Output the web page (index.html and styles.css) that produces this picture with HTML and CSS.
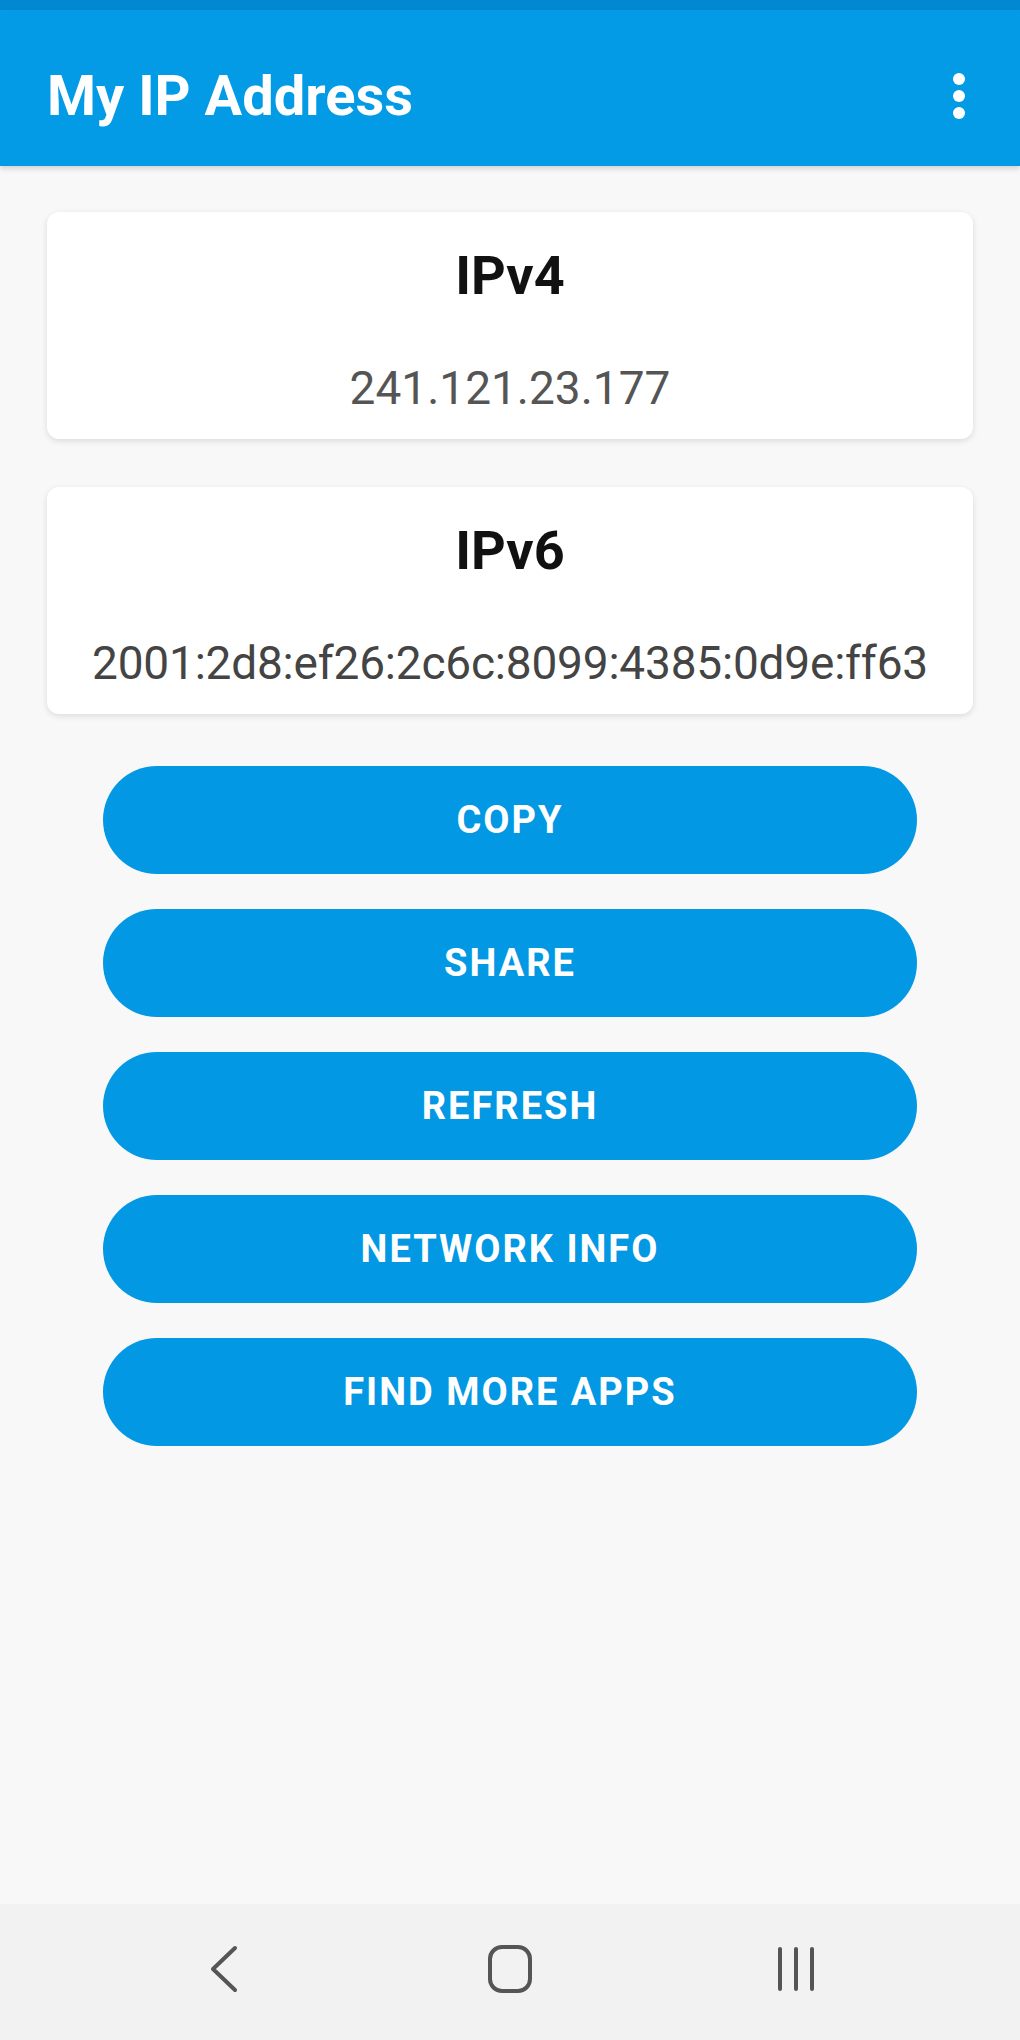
FILE: index.html
```html
<!DOCTYPE html>
<html lang="en">
	<head>
		<meta charset="utf-8" name="viewport" content="width=device-width,initial-scale=1.0" />
		<title>My IP Address</title>
		<link rel="stylesheet" href="styles.css">
	</head>
	<body>
		<div class="screen">
			<div class="status"></div>
			<div class="toolbar">
				<h1 class="title">My IP Address</h1>
				<div class="menu">
					<span></span>
					<span></span>
					<span></span>
				</div>
			</div>

			<div class="content">
				<div class="card">
					<h3>IPv4</h3>
					<p>241.121.23.177</p>
				</div>
				<div class="card">
					<h3>IPv6</h3>
					<p class="long">2001:2d8:ef26:2c6c:8099:4385:0d9e:ff63</p>
				</div>

				<div class="buttons">
					<button>Copy</button>
					<button>Share</button>
					<button>Refresh</button>
					<button>Network info</button>
					<button>Find more apps</button>
				</div>
			</div>

			<div class="navbar">
				<div class="nav-item">
					<svg width="30" height="48" viewBox="0 0 30 48">
						<polyline points="26,3 4,24 26,45" fill="none" stroke="#555" stroke-width="4" stroke-linecap="round" stroke-linejoin="round" />
					</svg>
				</div>
				<div class="nav-item">
					<svg width="46" height="50" viewBox="0 0 46 50">
						<rect x="3" y="3" width="40" height="44" rx="12" ry="12" fill="none" stroke="#555" stroke-width="4" />
					</svg>
				</div>
				<div class="nav-item">
					<svg width="44" height="48" viewBox="0 0 44 48">
						<line x1="6" y1="4" x2="6" y2="44" stroke="#555" stroke-width="4" stroke-linecap="round" />
						<line x1="22" y1="4" x2="22" y2="44" stroke="#555" stroke-width="4" stroke-linecap="round" />
						<line x1="38" y1="4" x2="38" y2="44" stroke="#555" stroke-width="4" stroke-linecap="round" />
					</svg>
				</div>
			</div>
		</div>
	</body>
</html>
```

FILE: styles.css
```css
* {
	padding: 0;
	margin: 0;
	box-sizing: border-box;
}

body {
	background: #f8f8f8;
	font-family: Roboto, "Liberation Sans", sans-serif;
}

.screen {
	display: flex;
	flex-direction: column;
	height: 2040px;
}

.status {
	height: 10px;
	background: #0288d1;
}

.toolbar {
	height: 156px;
	padding: 16px 47px 0 47px;
	display: flex;
	align-items: center;
	justify-content: space-between;
	background: #039be5;
	box-shadow: 0 3px 5px rgba(0, 0, 0, 0.14);
}

.title {
	color: #fff;
	font-size: 56px;
	font-weight: 700;
	line-height: 64px;
}

.menu {
	display: flex;
	flex-direction: column;
	gap: 5px;
	margin-right: 8px;
}

.menu span {
	width: 12px;
	height: 12px;
	border-radius: 50%;
	background: #fff;
}

.content {
	flex: 1;
	padding: 46px 47px 0;
}

.card {
	background: #fff;
	border-radius: 12px;
	padding: 32px 10px 23px;
	margin-bottom: 48px;
	text-align: center;
	box-shadow: 0 2px 6px rgba(0, 0, 0, 0.12);
}

.card h3 {
	font-size: 54px;
	font-weight: 700;
	line-height: 64px;
	color: #111;
}

.card p {
	margin-top: 52px;
	font-size: 46px;
	line-height: 56px;
	color: #555;
}

.card p.long {
	color: #444;
	white-space: nowrap;
	letter-spacing: -0.2px;
}

.buttons {
	display: flex;
	flex-direction: column;
	gap: 35px;
	padding: 4px 56px 0;
}

button {
	height: 108px;
	border: none;
	border-radius: 54px;
	background: #0398e3;
	color: #fff;
	font-family: Roboto, "Liberation Sans", sans-serif;
	font-size: 38px;
	font-weight: 700;
	letter-spacing: 2px;
	text-transform: uppercase;
}

.navbar {
	height: 136px;
	background: #f2f2f2;
	display: grid;
	grid-template-columns: repeat(3, 286px);
	justify-content: center;
	align-items: center;
	padding-bottom: 6px;
}

.nav-item {
	display: flex;
	justify-content: center;
}
```
